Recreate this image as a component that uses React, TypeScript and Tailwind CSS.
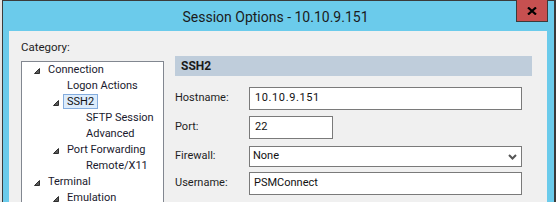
import React from 'react'

const TREE = [
  { label: 'Connection', level: 0, open: true },
  { label: 'Logon Actions', level: 1 },
  { label: 'SSH2', level: 1, open: true, selected: true },
  { label: 'SFTP Session', level: 2 },
  { label: 'Advanced', level: 2 },
  { label: 'Port Forwarding', level: 1, open: true },
  { label: 'Remote/X11', level: 2 },
  { label: 'Terminal', level: 0, open: true },
  { label: 'Emulation', level: 1, open: true },
]

// indent per tree level, in px (written out so tailwind picks them up)
const TRI_PAD = ['pl-[12px]', 'pl-[31px]', 'pl-[50px]']
const TEXT_PAD = ['pl-[26px]', 'pl-[45px]', 'pl-[64px]']

function Expander() {
  return (
    <svg width="6" height="6" viewBox="0 0 6 6" className="shrink-0">
      <path d="M5.5 0.5 L5.5 5.5 L0.5 5.5 Z" fill="#5b5b5b" stroke="#2e2e2e" strokeWidth="1" strokeLinejoin="miter" />
    </svg>
  )
}

function TreeRow({ label, level, open, selected }: { label: string; level: number; open?: boolean; selected?: boolean }) {
  return (
    <div className="relative h-[16px] flex items-center">
      {open && (
        <div className={`absolute left-0 top-[6px] ${TRI_PAD[level]}`}>
          <Expander />
        </div>
      )}
      <div className={TEXT_PAD[level]}>
        {selected ? (
          <span className="-ml-[4px] inline-block h-[15px] mt-[1px] px-[3px] leading-[13px] border border-[#84acdd] bg-[#dcecfc] text-[#111]">
            {label}
          </span>
        ) : (
          <span className="text-[#1a1a2e]">{label}</span>
        )}
      </div>
    </div>
  )
}

function Field({ label, children, className }: { label: string; children: React.ReactNode; className?: string }) {
  return (
    <div className={`flex items-center ${className ?? ''}`}>
      <span className="w-[74px] shrink-0 text-[#1e1e1e]">{label}</span>
      {children}
    </div>
  )
}

export default function App() {
  return (
    <div className="relative w-[556px] h-[202px] overflow-hidden flex bg-[#dcdcdc] font-['Roboto',sans-serif] text-[11px]">
      {/* window behind */}
      <div className="w-[2px] bg-[#e4e4e4]" />

      <div className="flex-1 flex flex-col bg-[#6bcbeb] border-l border-t border-r-2 border-[#3b3b3b]">
        {/* title bar */}
        <div className="h-[30px] shrink-0 flex items-center justify-center pt-[3px] pr-[6px] text-[14px] text-[#1b1b1b]">
          Session Options - 10.10.9.151
        </div>

        {/* client area */}
        <div className="flex-1 ml-[6px] mr-[7px] bg-[#f0f0f0] flex">
          {/* category tree */}
          <div className="w-[155px] shrink-0 pl-[12px] pt-[9px] flex flex-col">
            <div className="h-[15px] leading-[15px] text-[#1e1e1e] text-[11.5px]">Category:</div>
            <div className="mt-[6px] flex-1 bg-white border border-[#828790] border-b-0 text-[11px]">
              {TREE.map(t => (
                <TreeRow key={t.label} {...t} />
              ))}
            </div>
          </div>

          {/* ssh2 panel */}
          <div className="ml-[11px] pt-[25px] w-[357px] flex flex-col text-[11px]">
            <div className="h-[20px] bg-[#bfcddb] pl-[6px] flex items-center font-bold text-[12px] text-[#1a1a1a]">SSH2</div>

            <Field label="Hostname:" className="mt-[11px]">
              <div className="w-[273px] h-[23px] bg-white border border-[#7a7a7a] pl-[5px] flex items-center tracking-[0.6px] text-[#111]">
                10.10.9.151
              </div>
            </Field>

            <Field label="Port:" className="mt-[6px]">
              <div className="w-[84px] h-[23px] bg-white border border-[#7a7a7a] pl-[5px] flex items-center text-[#111]">
                22
              </div>
            </Field>

            <Field label="Firewall:" className="mt-[7px]">
              <div className="w-[273px] h-[21px] bg-white border border-[#7a7a7a] pl-[3px] pr-[4px] flex items-center justify-between text-[#111]">
                <span>None</span>
                <svg width="9" height="6" viewBox="0 0 9 6">
                  <path d="M1 1 L4.5 4.5 L8 1" fill="none" stroke="#555" strokeWidth="2" />
                </svg>
              </div>
            </Field>

            <Field label="Username:" className="mt-[5px]">
              <div className="w-[273px] h-[23px] bg-white border border-[#7a7a7a] pl-[4px] flex items-center text-[#111]">
                PSMConnect
              </div>
            </Field>
          </div>
        </div>
      </div>

      {/* close button sits over the title bar */}
      <div className="absolute left-[516px] top-0 w-[32px] h-[22px] bg-[#c75050] border border-[#3b3b3b] border-t-0 flex items-center justify-center">
        <svg width="10" height="8" viewBox="0 0 10 8">
          <path d="M1 0.5 L9 7.5 M9 0.5 L1 7.5" stroke="#000" strokeWidth="2.2" />
        </svg>
      </div>
    </div>
  )
}
